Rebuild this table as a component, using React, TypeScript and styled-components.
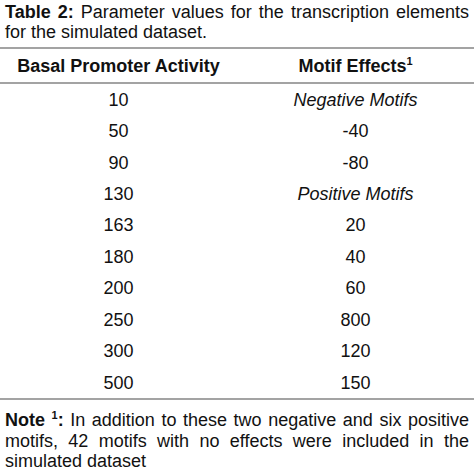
import React from "react";
import styled, { createGlobalStyle } from "styled-components";

const Global = createGlobalStyle`
  html, body {
    margin: 0;
    padding: 0;
    background: #ffffff;
    overflow: hidden;
  }
  body {
    font-family: "Liberation Sans", Arial, sans-serif;
    color: #111111;
  }
`;

const Page = styled.div`
  width: 474px;
  height: 467px;
  display: flex;
  flex-direction: column;
  font-size: 18px;
`;

const Caption = styled.p`
  margin: 0;
  padding: 2px 5px 0 5px;
  line-height: 20px;
  text-align: justify;
`;

const Bold = styled.b`
  font-weight: 700;
`;

const Sup = styled.sup`
  font-size: 11px;
  font-weight: 700;
  line-height: 0;
  vertical-align: 0;
  position: relative;
  top: -7px;
`;

const Table = styled.table`
  width: 474px;
  margin-top: 5px;
  border-collapse: collapse;
  table-layout: fixed;
`;

const HeadRow = styled.tr`
  border-top: 2px solid #a3a3a3;
  border-bottom: 2px solid #a3a3a3;
`;

const Th = styled.th`
  width: 237px;
  height: 33px;
  padding: 0;
  font-weight: 700;
  text-align: center;
  vertical-align: middle;
  line-height: 20px;
`;

const Tr = styled.tr<{ $last?: boolean }>`
  border-bottom: ${(p) => (p.$last ? "2px solid #a3a3a3" : "none")};
`;

const Td = styled.td<{ $italic?: boolean }>`
  height: 31.45px;
  padding: 0;
  text-align: center;
  vertical-align: middle;
  line-height: 20px;
  font-style: ${(p) => (p.$italic ? "italic" : "normal")};
`;

const Note = styled.p`
  margin: 0;
  padding: 10px 5px 0 5px;
  line-height: 20.5px;
  text-align: justify;
`;

const rows: { basal: string; effect: string; italic?: boolean }[] = [
  { basal: "10", effect: "Negative Motifs", italic: true },
  { basal: "50", effect: "-40" },
  { basal: "90", effect: "-80" },
  { basal: "130", effect: "Positive Motifs", italic: true },
  { basal: "163", effect: "20" },
  { basal: "180", effect: "40" },
  { basal: "200", effect: "60" },
  { basal: "250", effect: "800" },
  { basal: "300", effect: "120" },
  { basal: "500", effect: "150" },
];

export default function App() {
  return (
    <>
      <Global />
      <Page>
        <Caption>
          <Bold>Table 2:</Bold> Parameter values for the transcription elements
          for the simulated dataset.
        </Caption>
        <Table>
          <thead>
            <HeadRow>
              <Th>Basal Promoter Activity</Th>
              <Th>
                Motif Effects<Sup>1</Sup>
              </Th>
            </HeadRow>
          </thead>
          <tbody>
            {rows.map((r, i) => (
              <Tr key={r.basal} $last={i === rows.length - 1}>
                <Td>{r.basal}</Td>
                <Td $italic={r.italic}>{r.effect}</Td>
              </Tr>
            ))}
          </tbody>
        </Table>
        <Note>
          <Bold>
            Note <Sup>1</Sup>:
          </Bold>{" "}
          In addition to these two negative and six positive motifs, 42 motifs
          with no effects were included in the simulated dataset
        </Note>
      </Page>
    </>
  );
}
